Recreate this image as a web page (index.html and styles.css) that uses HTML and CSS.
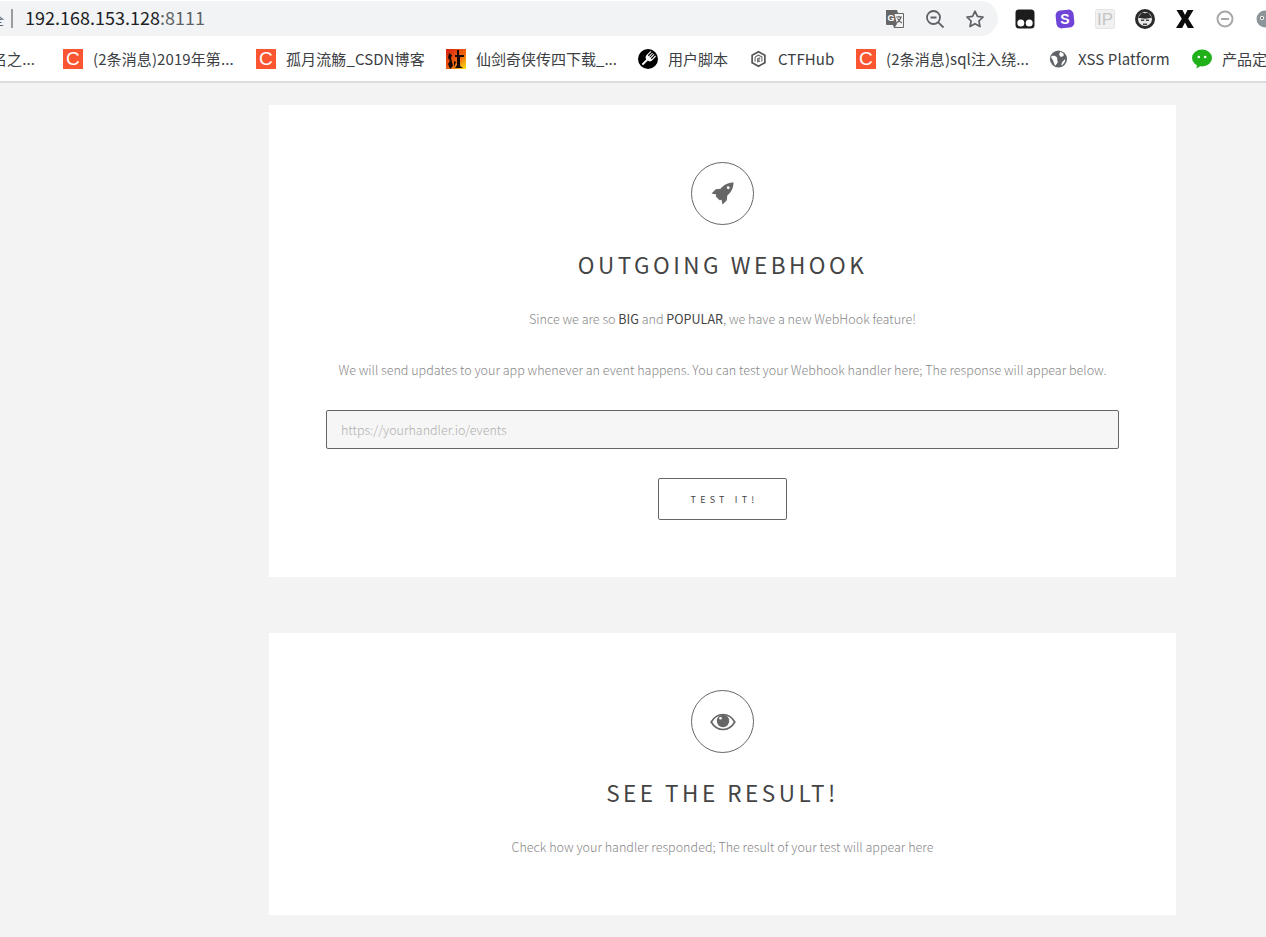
FILE: index.html
```html
<!DOCTYPE html>
<html lang="en">
<head>
<meta charset="utf-8">
<title>Outgoing Webhook</title>
<link rel="stylesheet" href="styles.css">
</head>
<body>
<header class="chrome">
  <div class="toolbar">
    <div class="omnibox">
      <span class="secure">全</span><span class="divider"></span>
      <span class="url">192.168.153.128<span class="port">:8111</span></span>
      <div class="omni-icons">
        <svg class="ic" viewBox="0 0 20 20"><path fill="#666" d="M1 1h11l1 3h5a1 1 0 0 1 1 1v13a1 1 0 0 1-1 1H9l-1-3H2a1 1 0 0 1-1-1z"/><path fill="#f4f4f4" d="M9.500 5H18v13H10l2-3z"/><text x="2.500" y="12" class="ic-g">G</text><path fill="none" stroke="#666" stroke-width="1.200" d="M11 8h6M14 7v1M16 8c-1 3-2.500 5-4.500 6M12.500 9.500c1 2 2.500 3.500 4.500 4.500"/></svg>
        <svg class="ic" viewBox="0 0 20 20"><circle cx="8.500" cy="8.500" r="6.500" fill="none" stroke="#5f6368" stroke-width="1.800"/><path stroke="#5f6368" stroke-width="1.800" d="M13.300 13.300 18.500 18.500M5.500 8.500h6"/></svg>
        <svg class="ic" viewBox="0 0 20 20"><path fill="none" stroke="#5f6368" stroke-width="1.700" stroke-linejoin="round" d="M10 2.200l2.400 5.200 5.600.7-4.100 3.900 1.100 5.600-5-2.800-5 2.800 1.100-5.600L2 8.100l5.600-.7z"/></svg>
      </div>
    </div>
    <div class="extensions">
      <svg class="ext" viewBox="0 0 20 20"><rect x="0.500" y="0.500" width="19" height="19" rx="3.500" fill="#1c1c1c"/><circle cx="5.800" cy="14" r="3.500" fill="#fff"/><circle cx="14.200" cy="14" r="3.500" fill="#fff"/></svg>
      <svg class="ext" viewBox="0 0 20 20"><rect x="1" y="1" width="18" height="18" rx="5" fill="#6f45d8" transform="rotate(-6 10 10)"/><text x="10" y="15" class="ext-s">S</text></svg>
      <svg class="ext" viewBox="0 0 20 20"><rect x="0.500" y="0.500" width="19" height="19" rx="2" fill="#f1f1f1" stroke="#e4e4e4"/><text x="10" y="16" class="ext-ip">IP</text></svg>
      <svg class="ext" viewBox="0 0 20 20"><circle cx="10" cy="10" r="8.500" fill="#e8e8e8" stroke="#2b2b2b" stroke-width="3"/><path fill="#2b2b2b" d="M3 8.500 7 3.500c2 1 4 1 6 0l4 5c-4 1.500-10 1.500-14 0z"/><path fill="#444" d="M6 10.500h3.200v1.500H6zM10.800 10.500H14v1.500h-3.200zM8 14.500h4V16H8z"/></svg>
      <svg class="ext" viewBox="0 0 20 20"><path fill="#0c0c0c" d="M1.500 1h6L10 6l2.500-5h6l-5.300 8.700L19 19h-6.200L10 13.500 7.200 19H1l5.800-9.300z"/></svg>
      <svg class="ext" viewBox="0 0 20 20"><circle cx="10" cy="10" r="7.500" fill="none" stroke="#a8a8a8" stroke-width="2"/><path stroke="#a8a8a8" stroke-width="2" d="M6 10h8"/></svg>
      <svg class="ext" viewBox="0 0 20 20"><circle cx="10" cy="10" r="8.500" fill="#8c9599"/><circle cx="7" cy="9" r="2" fill="#fff"/><circle cx="14" cy="9" r="2" fill="#fff"/><circle cx="7" cy="9" r=".9" fill="#333"/></svg>
    </div>
  </div>
  <nav class="bookmarks">
    <div class="bm bm-first"><span class="bm-clip">名之...</span></div>
    <div class="bm"><span class="fav-c">C</span><span>(2条消息)2019年第...</span></div>
    <div class="bm"><span class="fav-c">C</span><span>孤月流觞_CSDN博客</span></div>
    <div class="bm">
      <svg class="fav" viewBox="0 0 20 20"><defs><linearGradient id="fire" x1="0" y1="0" x2="1" y2="1"><stop offset="0" stop-color="#d81c10"/><stop offset=".6" stop-color="#f06a10"/><stop offset="1" stop-color="#ffe810"/></linearGradient></defs><rect width="20" height="20" fill="url(#fire)"/><path fill="#1a0a05" d="M3 4l3 2-1 3 2 8-3 3-2-5 2-3-2-3zM9 6h2V1h2v5h5v2h-4v9l3 2H9l2-3V8H9zM8 12l2 1-2 5z"/></svg>
      <span class="cjk">仙剑奇侠传四下载_...</span>
    </div>
    <div class="bm">
      <svg class="fav" viewBox="0 0 20 20"><circle cx="10" cy="10" r="10" fill="#000"/><g transform="rotate(45 10 10)"><path fill="#fff" d="M9 9h2v9H9z"/><path fill="#fff" d="M6.200 2.500h1.100v5h1.200v-5h1v5h1v-5h1v5h1.200v-5h1.100v6a3.300 3.300 0 0 1-3.300 2.800h-.6a3.300 3.300 0 0 1-3.700-2.800z"/></g></svg>
      <span class="cjk">用户脚本</span>
    </div>
    <div class="bm">
      <svg class="fav fav-hub" viewBox="0 0 20 20"><path fill="#fff" stroke="#555" stroke-width="2" d="M10 1.500 17.500 5.700v8.600L10 18.500 2.500 14.300V5.700z"/><path fill="none" stroke="#666" stroke-width="1.300" d="M6 7.500v5.500M6 7.500l4-2 4 2v5.500M9 9v5M12 9h-1.500v4H12"/></svg>
      <span>CTFHub</span>
    </div>
    <div class="bm"><span class="fav-c">C</span><span>(2条消息)sql注入绕...</span></div>
    <div class="bm">
      <svg class="fav fav-globe" viewBox="0 0 20 20"><circle cx="10" cy="10" r="9" fill="#5f6368"/><path fill="#fff" d="M2.500 7c2-.5 4-.5 5.500 1s0 3 1 4-1 3.500-2.500 5C5 15 5 12.500 4 11S2 9 2.500 7zM12 2c1 1 3 1.500 3.500 3s-1.500 3-3 2.500S10 5 12 2zM17 10c.5 2.500-1.500 5.500-4 7 0-2 .5-4 2-5z"/></svg>
      <span>XSS Platform</span>
    </div>
    <div class="bm">
      <svg class="fav" viewBox="0 0 20 20"><ellipse cx="10" cy="9" rx="10" ry="8.500" fill="#1fb01a"/><path fill="#1fb01a" d="M5 15l-.5 4.500L10 16z"/><circle cx="6.800" cy="8" r="1.300" fill="#fff"/><circle cx="13.200" cy="8" r="1.300" fill="#fff"/></svg>
      <span class="cjk">产品定</span>
    </div>
  </nav>
</header>
<main class="page">
  <section class="card card-webhook">
    <div class="badge">
      <svg class="badge-rocket" viewBox="0 0 24 24"><path fill="#666" fill-rule="evenodd" d="M23.500.5C18 .5 13 3 10 7L5 7.500.5 12l5 1-.5 2 4 4 2-.5 1 5 4.500-4.500.5-5c4-3 6.500-8 6.500-13.500zM18 4.500a1.500 1.500 0 1 1 0 3 1.500 1.500 0 0 1 0-3z"/></svg>
    </div>
    <h2 class="title">OUTGOING WEBHOOK</h2>
    <p class="text text-first">Since we are so <strong>BIG</strong> and <strong>POPULAR</strong>, we have a new WebHook feature!</p>
    <p class="text text-second">We will send updates to your app whenever an event happens. You can test your Webhook handler here; The response will appear below.</p>
    <input class="field" type="text" placeholder="https://yourhandler.io/events">
    <button class="test" type="button">TEST IT!</button>
  </section>
  <section class="card card-result">
    <div class="badge">
      <svg class="badge-eye" viewBox="0 0 26 18"><path fill="none" stroke="#666" stroke-width="1.700" d="M1.200 9C4 4.200 8.300 1.500 13 1.500S22 4.200 24.800 9C22 13.800 17.700 16.500 13 16.500S4 13.800 1.200 9z"/><circle cx="13" cy="8" r="6.200" fill="#666"/><circle cx="10.500" cy="5.200" r="1.300" fill="#fff"/></svg>
    </div>
    <h2 class="title">SEE THE RESULT!</h2>
    <p class="text text-first">Check how your handler responded; The result of your test will appear here</p>
  </section>
</main>
</body>
</html>
```
FILE: styles.css
```css
* { box-sizing: border-box; }
html, body { margin: 0; padding: 0; }
body {
  width: 1266px;
  height: 937px;
  overflow: hidden;
  background: #f3f3f3;
  font-family: "Noto Sans CJK SC", "Noto Sans", sans-serif;
}
.chrome {
  background: #fff;
  border-bottom: 2px solid #dadce0;
}
.toolbar {
  height: 36px;
  padding-top: 1px;
  display: flex;
}
.omnibox {
  width: 1008px;
  height: 35px;
  margin-left: -10px;
  flex: none;
  background: #f1f3f4;
  border-radius: 0 18px 18px 0;
  display: flex;
  align-items: center;
  color: #202124;
}
.secure { font-size: 14px; color: #5f6368; width: 14px; flex: none; }
.divider { width: 2px; height: 19px; margin-left: 7px; background: #9a9da0; flex: none; }
.url { margin: 0 0 3px 12px; font-size: 18px; color: #202124; }
.port { color: #5f6368; }
.omni-icons {
  margin-left: auto;
  margin-right: 13px;
  display: flex;
  gap: 20px;
}
.ic { width: 20px; height: 20px; display: block; }
.ic-g { font: 700 9px "Liberation Sans", sans-serif; fill: #fff; }
.extensions {
  flex: none;
  margin-left: 17px;
  display: flex;
  gap: 20px;
  padding-top: 8px;
}
.ext { width: 20px; height: 20px; display: block; flex: none; }
.ext-s { font: 700 14px "Liberation Sans", sans-serif; fill: #fff; text-anchor: middle; }
.ext-ip { font: 400 17px "Liberation Sans", sans-serif; fill: #c4c4c4; text-anchor: middle; }
.bookmarks {
  height: 45px;
  display: grid;
  grid-template-columns: 63px 193px 190px 192px 110px 108px 193px 143px 80px;
  align-items: center;
  overflow: hidden;
  font-size: 15px;
  letter-spacing: .1px;
  color: #3c4043;
  white-space: nowrap;
}
.cjk { letter-spacing: 0; }
.bm { display: flex; align-items: center; gap: 10px; overflow: hidden; }
.bm-clip { margin-left: -8px; }
.fav { width: 20px; height: 20px; flex: none; display: block; }
.fav-hub { margin-left: 2px; margin-right: 1px; width: 17px; }
.fav-globe { width: 19px; }
.fav-c {
  width: 20px;
  height: 20px;
  flex: none;
  background: #fc5531;
  color: #fff;
  font: 400 19px/20px "Liberation Sans", sans-serif;
  text-align: center;
}
.page {
  width: 907px;
  margin-left: 269px;
  padding-top: 22px;
  display: flex;
  flex-direction: column;
  gap: 56px;
}
.card {
  background: #fff;
  display: flex;
  flex-direction: column;
  align-items: center;
  padding-top: 57px;
}
.card-webhook { height: 472px; }
.card-result { height: 282px; }
.badge {
  width: 63px;
  height: 63px;
  border: 1px solid #666;
  border-radius: 50%;
  display: flex;
  align-items: center;
  justify-content: center;
}
.badge-rocket { width: 23px; height: 23px; }
.badge-eye { width: 26px; height: 18px; }
.title {
  margin: 23px 0 0;
  font-size: 22.500px;
  line-height: 32px;
  font-weight: 400;
  letter-spacing: 3.500px;
  color: #444;
}
.text {
  margin: 0;
  font-size: 12.550px;
  line-height: 20px;
  font-weight: 300;
  color: #888;
}
.text strong { font-weight: 400; color: #444; }
.text-first { margin-top: 29px; }
.text-second { margin-top: 31px; }
.field {
  width: 793px;
  height: 39px;
  margin-top: 30px;
  padding: 0 14px;
  border: 1px solid #666;
  border-radius: 2px;
  background: #f6f6f6;
  font: 300 12.500px "Noto Sans CJK SC", sans-serif;
}
.field::placeholder { color: #b0b0b0; opacity: 1; }
.test {
  width: 129px;
  height: 42px;
  margin-top: 29px;
  padding: 0 0 0 4px;
  border: 1px solid #666;
  border-radius: 2px;
  background: #fff;
  color: #444;
  font: 400 9px "Noto Sans CJK SC", sans-serif;
  letter-spacing: 4.200px;
}
```
